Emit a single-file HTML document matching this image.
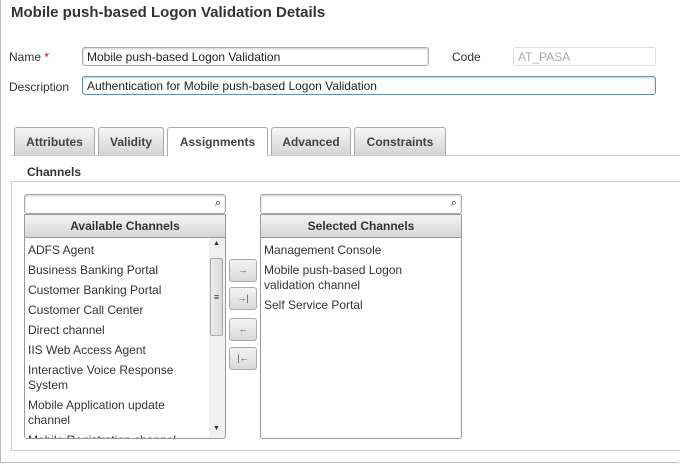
<html><head><style>
body{margin:0;width:680px;height:464px;background:#fff;font-family:"Liberation Sans",Arial,sans-serif;font-size:12px;color:#333;position:relative;overflow:hidden}
.a{position:absolute}
.frame{left:0;top:0;width:678px;height:462px;border-left:1px solid #bbb;border-bottom:1px solid #bbb}
h1{position:absolute;left:11px;top:4px;margin:0;font-size:15px;font-weight:bold;color:#333}
.inp{position:absolute;border:1px solid #a9a9a9;border-radius:3px;height:19px;box-sizing:border-box;padding:2px 4px;font-size:12px;color:#222;background:#fff;box-shadow:inset 0 1px 2px #ccc}
.tab{position:absolute;top:127px;height:28px;box-sizing:border-box;border:1px solid #aaa;border-bottom:none;border-radius:3px 3px 0 0;background:linear-gradient(#f6f6f6,#d4d4d4);font-weight:bold;text-align:center;line-height:28px;color:#444}
.hdr{position:absolute;height:24px;box-sizing:border-box;border:1px solid #999;background:linear-gradient(#f4f4f4,#d6d6d6);font-weight:bold;text-align:center;line-height:22px;color:#333}
.list{position:absolute;border:1px solid #999;border-top:none;border-radius:0 0 3px 3px;box-sizing:border-box;overflow:hidden;background:#fff;padding-top:2px}
.list div{padding:0 3px 0 3px;line-height:15px;margin:3px 0 5px}
#l div{width:170px}
#r div{width:158px}
.btn{position:absolute;left:229px;width:28px;height:23px;box-sizing:border-box;border:1px solid #aaa;border-radius:3px;background:linear-gradient(#f4f4f4,#d8d8d8);text-align:center;line-height:21px;font-size:9px;color:#456}
.srch{position:absolute;right:4px;top:2px;font-size:11px}
</style></head><body>
<div class="a frame"></div>
<h1>Mobile push-based Logon Validation Details</h1>
<div class="a" style="left:9px;top:50px">Name<span style="color:#c00"> *</span></div>
<div class="inp" style="left:82px;top:47px;width:347px">Mobile push-based Logon Validation</div>
<div class="a" style="left:452px;top:50px">Code</div>
<div class="inp" style="left:513px;top:47px;width:143px;color:#aaa;border-color:#ddd;box-shadow:none">AT_PASA</div>
<div class="a" style="left:9px;top:80px">Description</div>
<div class="inp" style="left:82px;top:76px;width:574px;border-color:#6a8fa8">Authentication for Mobile push-based Logon Validation</div>
<div class="a" style="left:11px;top:155px;width:669px;border-top:1px solid #ccc"></div>
<div class="tab" style="left:14px;width:81px">Attributes</div>
<div class="tab" style="left:98px;width:66px">Validity</div>
<div class="tab" style="left:167px;width:101px;background:#fff;height:29px">Assignments</div>
<div class="tab" style="left:271px;width:80px">Advanced</div>
<div class="tab" style="left:354px;width:92px">Constraints</div>
<div class="a" style="left:11px;top:181px;width:669px;height:270px;box-sizing:border-box;border:1px solid #ccc;border-right:none"></div>
<div class="a" style="left:22px;top:164px;background:#fff;padding:0 5px;font-weight:bold;line-height:16px">Channels</div>
<div class="inp" style="left:24px;top:194px;width:202px;height:20px"><span class="srch">⌕</span></div>
<div class="hdr" style="left:24px;top:214px;width:202px">Available Channels</div>
<div class="list" id="l" style="left:24px;top:238px;width:202px;height:201px">
<div>ADFS Agent</div><div>Business Banking Portal</div><div>Customer Banking Portal</div><div>Customer Call Center</div><div>Direct channel</div><div>IIS Web Access Agent</div><div>Interactive Voice Response System</div><div>Mobile Application update channel</div><div>Mobile Registration channel</div>
<span class="a" style="left:184px;top:0;width:16px;height:199px;background:#f0f0f0"></span>
<span class="a" style="left:185px;top:20px;width:13px;height:78px;border:1px solid #aaa;border-radius:2px;background:linear-gradient(90deg,#eee,#d8d8d8);box-sizing:border-box;text-align:center;line-height:76px;font-size:9px">≡</span>
<span class="a" style="left:188px;top:2px;font-size:7px">▲</span>
<span class="a" style="left:188px;top:187px;font-size:7px">▼</span>
</div>
<div class="btn" style="top:259px">→</div>
<div class="btn" style="top:287px">→|</div>
<div class="btn" style="top:318px">←</div>
<div class="btn" style="top:347px">|←</div>
<div class="inp" style="left:260px;top:194px;width:202px;height:20px"><span class="srch">⌕</span></div>
<div class="hdr" style="left:260px;top:214px;width:202px">Selected Channels</div>
<div class="list" id="r" style="left:260px;top:238px;width:202px;height:201px">
<div>Management Console</div><div>Mobile push-based Logon validation channel</div><div>Self Service Portal</div>
</div>
</body></html>
